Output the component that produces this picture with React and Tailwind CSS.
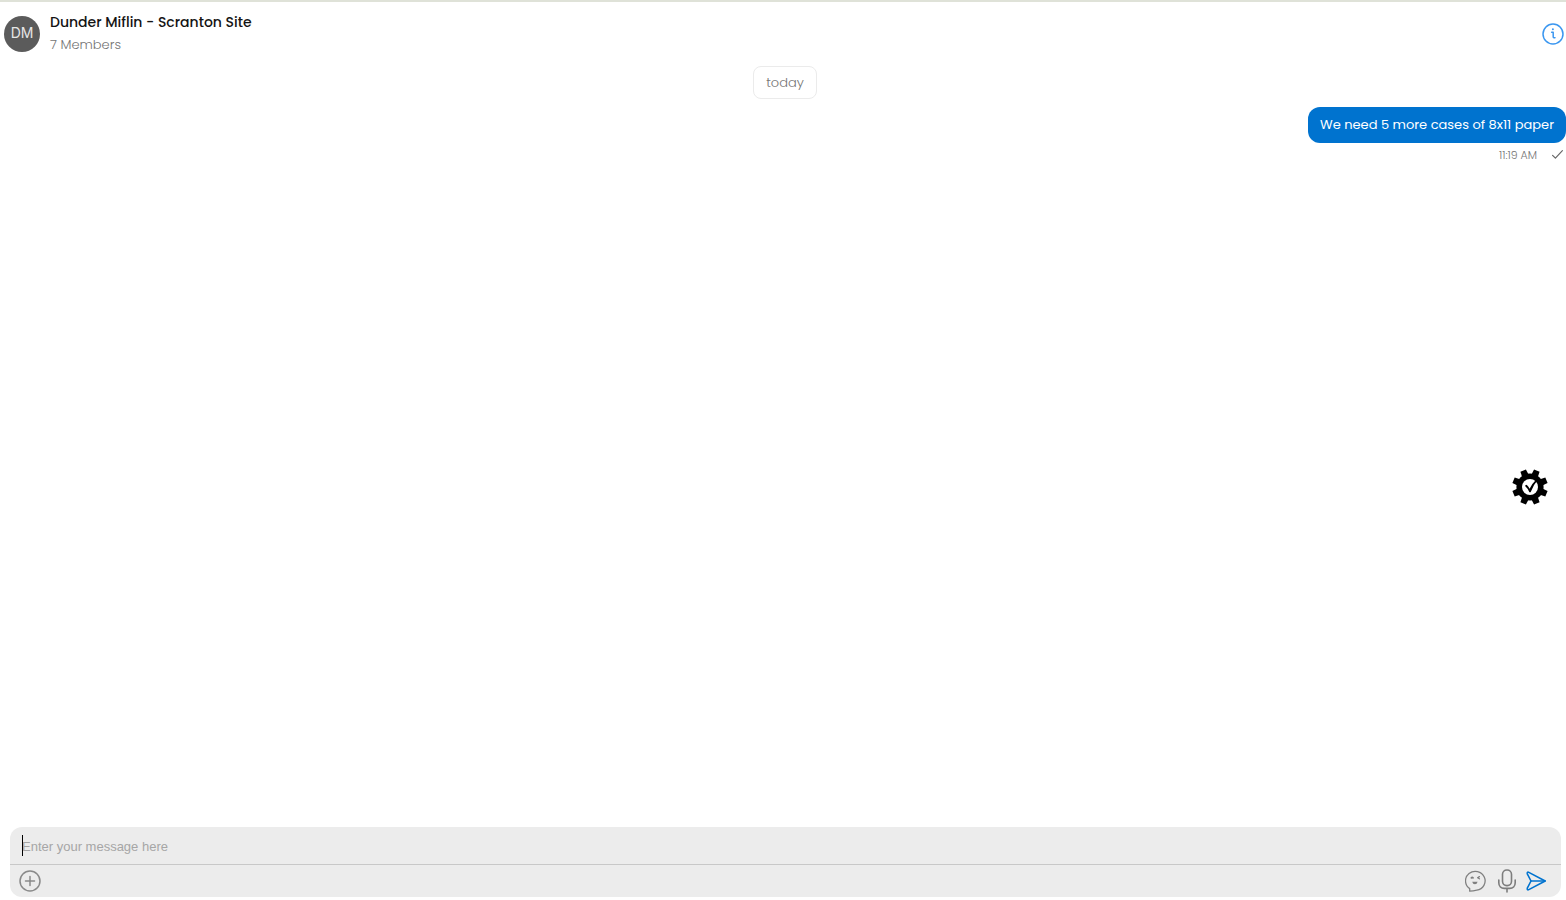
import React from "react";

const messages = [
  { id: 1, text: "We need 5 more cases of 8x11 paper", time: "11:19 AM" },
];

function InfoIcon() {
  return (
    <svg viewBox="0 0 22 22" className="size-[22px]" fill="none" stroke="#3b97f0" strokeLinecap="round" strokeLinejoin="round" aria-hidden="true">
      <circle cx="11" cy="11" r="10" strokeWidth="1.5" />
      <path d="M9.6 9.3h1.6v4.4q0 1.2 1.8 1" strokeWidth="1.5" />
      <circle cx="10.9" cy="6.2" r="1" fill="#3b97f0" stroke="none" />
    </svg>
  );
}

function SentIcon() {
  return (
    <svg viewBox="0 0 12 12" className="size-3" fill="none" stroke="#666" strokeWidth="1.2" strokeLinecap="round" strokeLinejoin="round" aria-hidden="true">
      <path d="M1.6 6.4l2.8 2.7L11.4 1.6" />
    </svg>
  );
}

function GearIcon() {
  const angles = [22.5, 67.5, 112.5, 157.5, 202.5, 247.5, 292.5, 337.5];
  return (
    <svg viewBox="0 0 36 36" className="size-9" aria-hidden="true">
      {angles.map((a) => (
        <path key={a} d="M14.6 6.5L15 0.2H21L21.4 6.5Z" transform={`rotate(${a} 18 18)`} />
      ))}
      <circle cx="18" cy="18" r="13.6" />
      <circle cx="18" cy="18" r="8" fill="#fff" />
      <path d="M12.9 16.7l1.7-.9q1.8 1.5 3 4 2.6-5.6 7.6-10.4l1 .8q-4.6 5.2-7.6 13h-1.2q-1.7-4-4.5-6.5z" />
    </svg>
  );
}

function PlusIcon() {
  return (
    <svg viewBox="0 0 22 22" className="size-[22px]" fill="none" stroke="#8a8a8a" strokeWidth="1.5" strokeLinecap="round" aria-hidden="true">
      <circle cx="11" cy="11" r="10" />
      <path d="M11 6.5v9M6.5 11h9" />
    </svg>
  );
}

function StickerIcon() {
  return (
    <svg viewBox="0 0 22 22" className="size-[22px]" fill="none" stroke="#808080" strokeWidth="1.3" strokeLinecap="round" strokeLinejoin="round" aria-hidden="true">
      <path d="M4.7 21.2V18.6A9.8 9.5 0 1 1 11.8 20.2Q8 21 4.7 21.2Z" />
      <path d="M6.4 7.9q.8-.9 1.6 0" strokeWidth="1.8" />
      <path d="M14.4 6.6l-1.8 1.1 1.8 1.1" />
      <path d="M7.2 11.8h5.4q-.6 2.5-2.7 2.5t-2.7-2.5z" fill="#808080" stroke="none" />
    </svg>
  );
}

function MicIcon() {
  return (
    <svg viewBox="0 0 20 24" className="h-6 w-5" fill="none" stroke="#7d7d7d" strokeWidth="1.6" strokeLinecap="round" strokeLinejoin="round" aria-hidden="true">
      <rect x="5.5" y="1" width="9" height="15.6" rx="4.3" />
      <path d="M1.8 11v2.8c0 3.4 2.4 5.6 5.4 5.6h5.6c3 0 5.4-2.2 5.4-5.6V11M10 19.6V23" />
    </svg>
  );
}

function SendIcon() {
  return (
    <svg viewBox="0 0 22 22" className="size-[22px]" fill="none" stroke="#0073cf" strokeWidth="1.6" strokeLinecap="round" strokeLinejoin="round" aria-hidden="true">
      <path d="M2.3 3.8c-.4-1.4.4-2 1.5-1.4L20.2 11 3.8 19.6c-1.1.6-1.9 0-1.5-1.4L6 11z" />
      <path d="M6 11H20" />
    </svg>
  );
}

export default function App() {
  return (
    <div className="relative flex min-h-screen flex-col border-t-2 border-[#dfe2d8] bg-white font-['Poppins','Inter',sans-serif]">
      <header className="flex items-center justify-between pt-2 pr-0.5 pl-1">
        <div className="flex items-center gap-2.5">
          <div className="mt-0.5 flex size-9 items-center justify-center rounded-full bg-[#5b5b5b] pb-0.5 font-['Inter',sans-serif] text-sm text-[#e6e6e6]">
            DM
          </div>
          <div>
            <h1 className="text-sm leading-6 font-medium text-[#141414]">Dunder Miflin - Scranton Site</h1>
            <p className="text-[13px] leading-[22px] font-light text-[#757575]">7 Members</p>
          </div>
        </div>
        <button type="button" aria-label="Conversation details" className="mt-0.5">
          <InfoIcon />
        </button>
      </header>

      <main className="flex grow flex-col pt-2.5">
        <div className="ml-1 self-center rounded-lg border border-[#ebebeb] px-3 py-1.5 text-[13px] leading-[19px] font-light text-[#757575]">
          today
        </div>
        <ul className="mt-2 flex flex-col gap-2">
          {messages.map((m) => (
            <li key={m.id} className="flex flex-col items-end">
              <p className="rounded-xl bg-[#0073cf] px-3 py-2 text-[13px] leading-5 font-normal text-white">{m.text}</p>
              <div className="flex items-center gap-3.5 pt-1 pr-[3px] text-[11px] leading-4 font-light text-[#757575]">
                <time>{m.time}</time>
                <SentIcon />
              </div>
            </li>
          ))}
        </ul>
      </main>

      <button type="button" aria-label="Settings" className="absolute top-[467px] right-[18px]">
        <GearIcon />
      </button>

      <form className="mr-[5px] mb-[3px] ml-2.5 rounded-xl bg-[#ececec]" onSubmit={(e) => e.preventDefault()}>
        <div className="relative border-b border-[#c8c8c8] px-3 py-2">
          <span className="absolute top-2 left-3 h-[21px] w-px bg-black" aria-hidden="true" />
          <input
            type="text"
            aria-label="Message"
            placeholder="Enter your message here"
            className="block h-[21px] w-full bg-transparent pt-0.5 font-['Liberation_Sans',Arial,sans-serif] text-[13px] caret-transparent outline-none placeholder:text-[#a6a6a6]"
          />
        </div>
        <div className="flex h-8 items-center justify-between pr-3.5 pl-[9px]">
          <button type="button" aria-label="Add attachment">
            <PlusIcon />
          </button>
          <div className="flex items-center gap-2">
            <button type="button" aria-label="Stickers" className="mr-0.5">
              <StickerIcon />
            </button>
            <button type="button" aria-label="Record voice message">
              <MicIcon />
            </button>
            <button type="submit" aria-label="Send message">
              <SendIcon />
            </button>
          </div>
        </div>
      </form>
    </div>
  );
}
